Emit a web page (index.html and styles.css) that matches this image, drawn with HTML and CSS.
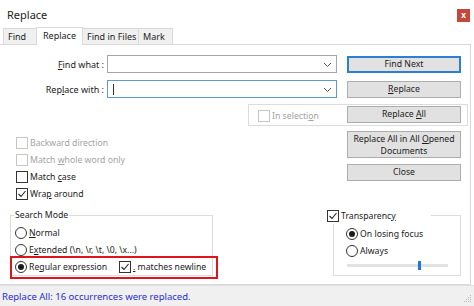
FILE: index.html
```html
<!DOCTYPE html>
<html>
<head>
<meta charset="utf-8">
<link rel="stylesheet" href="styles.css">
</head>
<body>
<div class="dialog">
  <div class="titlebar">
    <span class="title">Replace</span>
    <span class="close">x</span>
  </div>
  <div class="tabs">
    <div class="tab t-find">Find</div>
    <div class="tab active t-rep">Replace</div>
    <div class="tab t-files">Find in Files</div>
    <div class="tab t-mark">Mark</div>
  </div>
  <div class="panel">
    <div class="top">
      <div class="fields">
        <div class="row">
          <label class="lbl"><u>F</u>ind what :</label>
          <div class="combo">
            <svg class="chev" width="9" height="6" viewBox="0 0 9 6"><polyline points="1,1 4.5,4.5 8,1" fill="none" stroke="#555" stroke-width="1"/></svg>
          </div>
        </div>
        <div class="row">
          <label class="lbl">Rep<u>l</u>ace with :</label>
          <div class="combo focus">
            <span class="caret"></span>
            <svg class="chev" width="9" height="6" viewBox="0 0 9 6"><polyline points="1,1 4.5,4.5 8,1" fill="none" stroke="#555" stroke-width="1"/></svg>
          </div>
        </div>
        <div class="checks">
          <div class="chk disabled"><span class="box"></span><span>Backward direction</span></div>
          <div class="chk disabled"><span class="box"></span><span>Match <u>w</u>hole word only</span></div>
          <div class="chk"><span class="box"></span><span>Match <u>c</u>ase</span></div>
          <div class="chk"><span class="box"><svg width="10" height="10" viewBox="0 0 10 10"><polyline points="1.5,5 4,7.5 8.5,2" fill="none" stroke="#222" stroke-width="1.1"/></svg></span><span>Wra<u>p</u> around</span></div>
        </div>
      </div>
      <div class="buttons">
        <div class="btn default">Find Next</div>
        <div class="btn"><u>R</u>eplace</div>
        <div class="btn">Replace <u>A</u>ll</div>
        <div class="btn tall">Replace All in All <u>O</u>pened<br>Documents</div>
        <div class="btn">Close</div>
      </div>
    </div>
    <div class="insel">
      <div class="chk disabled"><span class="box"></span><span>In selecti<u>o</u>n</span></div>
    </div>
    <div class="bottom">
      <fieldset class="group smode">
        <legend>Search Mode</legend>
        <div class="rad"><span class="circle"></span><span><u>N</u>ormal</span></div>
        <div class="rad"><span class="circle"></span><span>E<u>x</u>tended (\n, \r, \t, \0, \x...)</span></div>
        <div class="rad regrow">
          <div class="radpart"><span class="circle on"></span><span>Re<u>g</u>ular expression</span></div>
          <div class="chk"><span class="box"><svg width="10" height="10" viewBox="0 0 10 10"><polyline points="1.5,5 4,7.5 8.5,2" fill="none" stroke="#222" stroke-width="1.1"/></svg></span><span><u>.</u> matches newline</span></div>
        </div>
      </fieldset>
      <div class="group tgroup">
        <div class="tcheck chk"><span class="box"><svg width="10" height="10" viewBox="0 0 10 10"><polyline points="1.5,5 4,7.5 8.5,2" fill="none" stroke="#222" stroke-width="1.1"/></svg></span><span>Transparenc<u>y</u></span></div>
        <div class="rad"><span class="circle on"></span><span>On losing focus</span></div>
        <div class="rad"><span class="circle"></span><span>Always</span></div>
        <div class="slider"><span class="track"></span><span class="thumb"></span></div>
      </div>
    </div>
    <div class="redbox"></div>
  </div>
  <div class="status">
    <span class="msg">Replace All: 16 occurrences were replaced.</span>
    <svg class="grip" width="8" height="8" viewBox="0 0 8 8"><g fill="#b8b8b8"><rect x="6" y="0" width="1" height="1"/><rect x="4" y="2" width="1" height="1"/><rect x="6" y="2" width="1" height="1"/><rect x="2" y="4" width="1" height="1"/><rect x="4" y="4" width="1" height="1"/><rect x="6" y="4" width="1" height="1"/><rect x="0" y="6" width="1" height="1"/><rect x="2" y="6" width="1" height="1"/><rect x="4" y="6" width="1" height="1"/><rect x="6" y="6" width="1" height="1"/></g></svg>
  </div>
</div>
</body>
</html>
```

FILE: styles.css
```css
* { box-sizing: border-box; }
html, body { margin: 0; padding: 0; background: #fff; }
body {
  font-family: "Noto Sans", "Segoe UI", sans-serif;
  font-size: 8.7px;
  color: #1b1b1b;
  width: 474px;
  height: 306px;
  overflow: hidden;
}
u { text-decoration: underline; text-underline-offset: 1px; }
.dialog { width: 474px; height: 306px; display: flex; flex-direction: column; background: #fff; }

.titlebar { height: 26px; display: flex; align-items: center; padding-left: 7px; position: relative; }
.title { font-size: 11px; color: #222; margin-top: 2px; }
.close {
  position: absolute; left: 457px; top: 9px; width: 13px; height: 13px;
  background: #c4473a; color: #fff; font-size: 8px; line-height: 12px; text-align: center;
  font-weight: bold;
}

.tabs { height: 18px; display: flex; align-items: flex-end; padding-left: 3px; }
.tab {
  height: 16px; line-height: 15px; background: #f0f0f0; border: 1px solid #d9d9d9; border-bottom: none;
  padding-left: 4px; color: #222; font-size: 9px;
}
.t-find { width: 34px; }
.t-rep { width: 47px; }
.t-files { width: 57px; }
.t-mark { width: 35px; }
.tab.active { height: 18px; background: #fff; line-height: 16px; padding-left: 6px; margin-bottom: -1px; position: relative; z-index: 1; border-color: #d9d9d9; }
.tab + .tab { margin-left: -1px; }

.panel {
  height: 241px; border: 1px solid #d9d9d9; border-left: none; width: 471px; position: relative;
  padding-top: 10px;
}
.top { display: flex; }
.fields { width: 347px; }
.row { display: flex; align-items: center; height: 18px; margin-bottom: 7px; }
.lbl { width: 104px; text-align: right; margin-right: 3px; font-size: 9px; }
.combo {
  width: 230px; height: 18px; border: 1px solid #a6a6a6; position: relative; background: #fff;
}
.combo.focus { border-color: #5b9bd5; }
.chev { position: absolute; right: 4px; top: 6px; }
.caret { position: absolute; left: 5px; top: 3px; width: 1px; height: 11px; background: #333; }

.checks { margin-top: 36px; padding-left: 16px; }
.chk { display: flex; align-items: center; height: 17px; }
.box {
  width: 12px; height: 12px; border: 1px solid #333; margin-right: 2px; display: flex;
  align-items: center; justify-content: center; background: #fff; flex: none;
}
.chk.disabled { color: #a3a3a3; }
.chk.disabled .box { border-color: #c6c6c6; }

.buttons { width: 114px; display: flex; flex-direction: column; padding-top: 1px; }
.btn {
  height: 17px; background: #e1e1e1; border: 1px solid #adadad; text-align: center; line-height: 15px;
  margin-bottom: 8px; color: #1b1b1b;
}
.btn.default { border: 2px solid #2a7fd0; line-height: 13px; }
.btn.tall { height: 27px; line-height: 12px; padding-top: 1px; margin-bottom: 6px; }

.insel {
  position: absolute; left: 248px; top: 59px; width: 220px; height: 22px;
  border: 1px solid #dcdcdc; padding-left: 9px; padding-top: 2px;
}

.bottom { display: flex; margin-top: 7px; }
.group { border: 1px solid #dcdcdc; }
fieldset.group { margin: 0; padding: 0 0 0 3px; min-width: 0; }
.smode { margin-left: 10px !important; width: 203px; height: 67px; }
.smode legend { padding: 0 1px; margin-left: 0; line-height: 12px; }
.rad { display: flex; align-items: center; height: 16.5px; }
.smode .rad:first-of-type { margin-top: 4px; }
.circle {
  width: 12px; height: 12px; border: 1px solid #333; border-radius: 50%; margin-right: 2px;
  display: flex; align-items: center; justify-content: center; flex: none; background: #fff;
}
.circle.on::after { content: ""; width: 6px; height: 6px; border-radius: 50%; background: #1b1b1b; }
.smode .rad { padding-left: 1px; }
.regrow { display: grid; grid-template-columns: 104px auto; }
.regrow .radpart { display: flex; align-items: center; }

.tgroup { position: relative; margin-left: 120px; width: 128px; height: 61px; margin-top: 6px; padding-left: 12px; padding-top: 9px; }
.tgroup .rad { height: 17px; }
.tcheck { position: absolute; left: -7px; top: -9px; width: 104px; background: #fff; }
.slider { position: relative; height: 10px; margin-top: 1px; }
.track { position: absolute; left: 1px; top: 4px; width: 101px; height: 3px; background: #e2e2e2; }
.thumb { position: absolute; left: 72px; top: 1px; width: 3px; height: 9px; background: #1f78d6; }

.redbox { position: absolute; left: 10px; top: 211px; width: 208px; height: 23px; border: 2px solid #e0141c; }

.status {
  height: 21px; background: #f0f0f0; border-top: 1px solid #e0e0e0; position: relative;
  display: flex; align-items: center; padding-left: 2px;
}
.msg { color: #2b2bd6; font-size: 9.5px; }
.grip { position: absolute; right: 2px; bottom: 3px; }
```
